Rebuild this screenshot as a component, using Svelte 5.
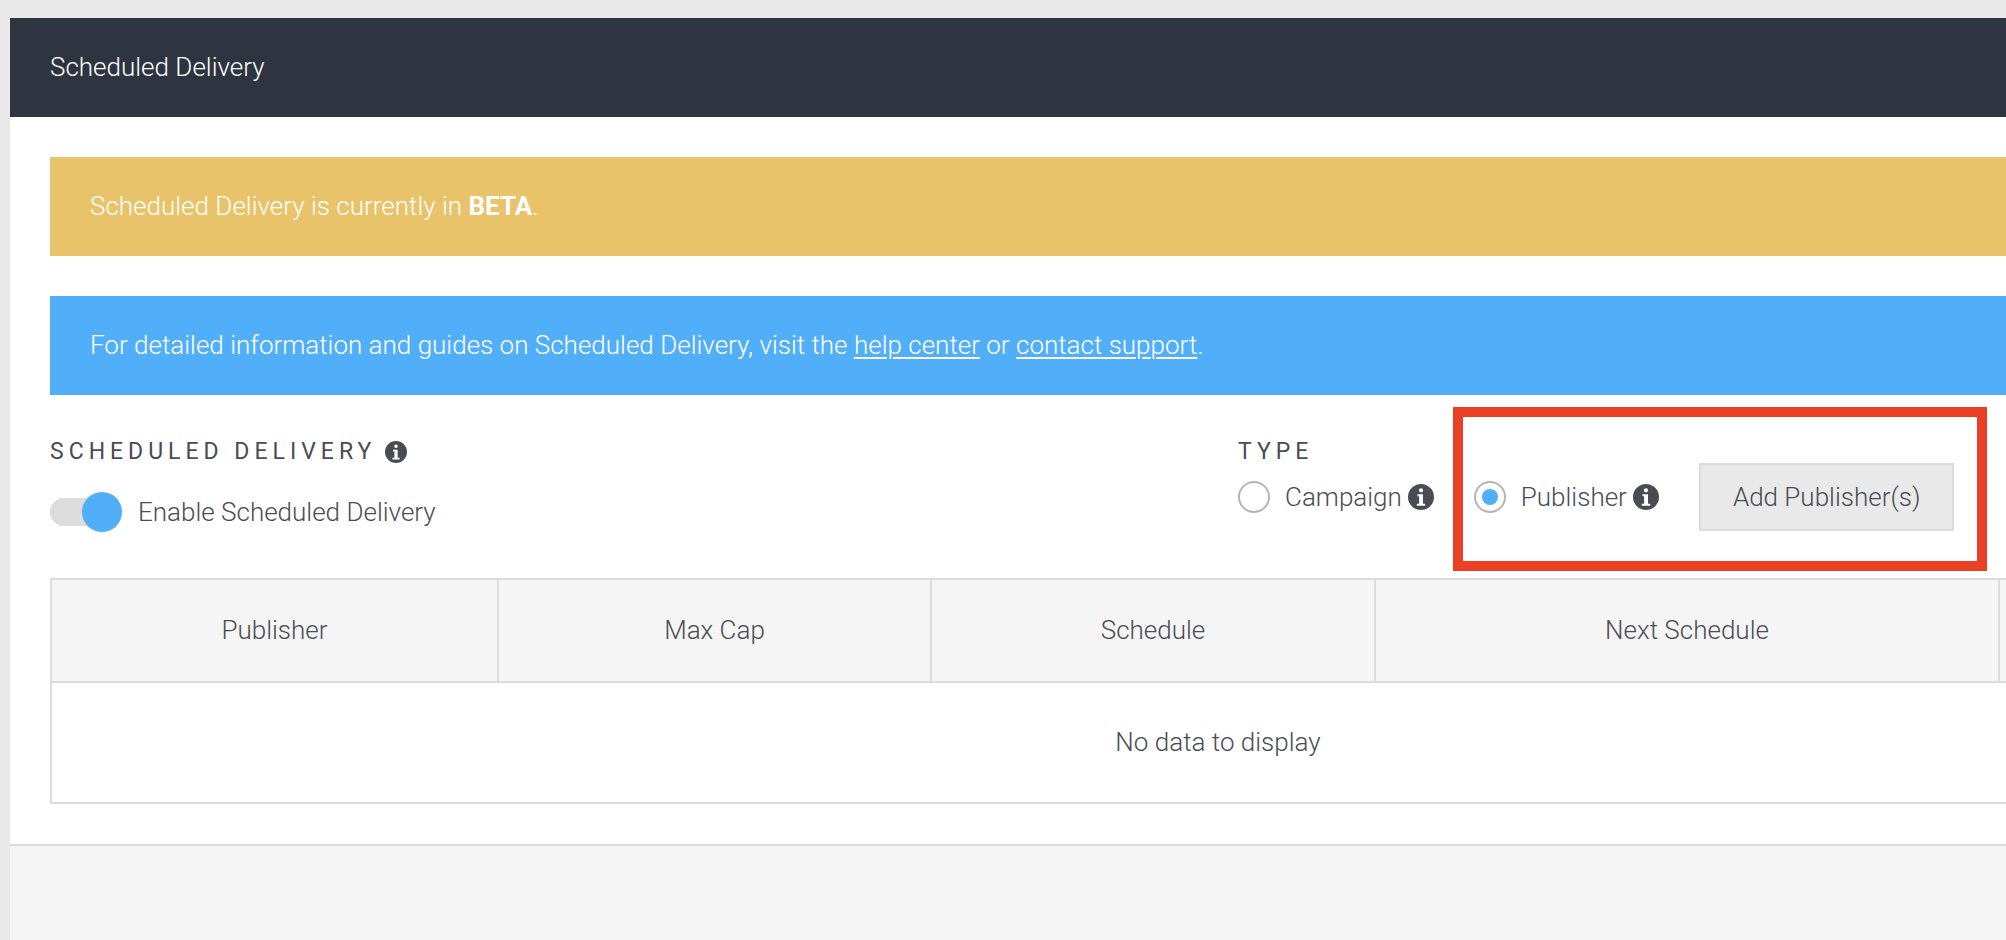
<script>
  let enabled = $state(true);
  let type = $state('publisher');
  const columns = [
    { name: 'Publisher', width: 447 },
    { name: 'Max Cap', width: 433 },
    { name: 'Schedule', width: 444 },
    { name: 'Next Schedule', width: 624 },
    { name: '', width: null },
  ];
</script>

{#snippet info(small)}
  <svg class="info" class:small viewBox="8 8 496 496" aria-hidden="true">
    <path
      fill-rule="evenodd"
      d="M256 8a248 248 0 1 0 0 496a248 248 0 1 0 0-496zM256 88a40 40 0 1 1 0 80a40 40 0 1 1 0-80zM188 204h106v180h42v40H176v-40h44V244h-32z"
    />
  </svg>
{/snippet}

<div class="page">
  <section class="panel">
    <header>Scheduled Delivery</header>
    <div class="content">
      <div class="banner warning"><p>Scheduled Delivery is currently in <strong>BETA</strong>.</p></div>
      <div class="banner notice">
        <p>
          For detailed information and guides on Scheduled Delivery, visit the
          <a href="#help">help center</a> or <a href="#support">contact support</a>.
        </p>
      </div>

      <div class="settings">
        <div>
          <h2>Scheduled Delivery {@render info(true)}</h2>
          <label class="toggle">
            <input type="checkbox" bind:checked={enabled} />
            Enable Scheduled Delivery
          </label>
        </div>
        <div>
          <h2 id="type-heading">Type</h2>
          <div class="types" role="radiogroup" aria-labelledby="type-heading">
            <label class="option">
              <input type="radio" name="type" value="campaign" bind:group={type} />
              <span>Campaign {@render info(false)}</span>
            </label>
            <div class="highlighted">
              <label class="option">
                <input type="radio" name="type" value="publisher" bind:group={type} />
                <span>Publisher {@render info(false)}</span>
              </label>
              <button type="button">Add Publisher(s)</button>
            </div>
          </div>
        </div>
      </div>

      <table>
        <colgroup>
          {#each columns as column}
            <col style:width={column.width ? `${column.width}px` : null} />
          {/each}
        </colgroup>
        <thead>
          <tr>
            {#each columns as column}
              <th scope="col">{column.name}</th>
            {/each}
          </tr>
        </thead>
        <tbody>
          <tr><td colspan={columns.length}>No data to display</td></tr>
        </tbody>
      </table>
    </div>
  </section>
</div>

<style>
  :global(body) {
    margin: 0;
    background: #f5f5f5;
  }

  .page {
    box-sizing: border-box;
    min-height: 100vh;
    overflow: hidden;
    padding-left: 10px;
    border-top: 18px solid #e9e9e9;
    background: linear-gradient(90deg, #e9e9e9 10px, #f5f5f5 10px);
    color: #494c53;
    font: 300 26px/32px Roboto, sans-serif;
  }

  .panel {
    width: calc(100% + 420px);
    background: #fff;
    border-bottom: 2px solid #dcdcdc;
  }

  header {
    padding: 33px 40px 34px;
    background: #2e3440;
    color: #fff;
  }

  .content {
    padding: 40px;
  }

  .banner {
    padding: 33px 40px 34px;
    color: #fff;
  }

  .banner p {
    margin: 0;
  }

  .banner strong {
    font-weight: 700;
  }

  .banner a {
    color: inherit;
    text-underline-offset: 3px;
    text-decoration-thickness: 2px;
  }

  .warning {
    margin-bottom: 40px;
    background: #e8c369;
  }

  .notice {
    background: #51aff9;
  }

  .settings {
    display: grid;
    grid-template-columns: 1fr 1fr;
    gap: 40px;
    padding: 44px 0 46px;
  }

  h2 {
    display: flex;
    align-items: center;
    gap: 9px;
    margin: 0 0 -2px;
    font-size: 23px;
    font-weight: 400;
    line-height: 26px;
    letter-spacing: 5px;
    text-transform: uppercase;
  }

  .info {
    flex: none;
    width: 26px;
    height: 26px;
    fill: #494c53;
  }

  .info.small {
    width: 22px;
    height: 22px;
  }

  .toggle {
    display: flex;
    align-items: center;
    gap: 16px;
    margin-top: 29px;
  }

  .toggle input {
    display: flex;
    align-items: center;
    appearance: none;
    width: 72px;
    height: 40px;
    margin: 0;
    background: linear-gradient(#dcdcdc, #dcdcdc) 14px center / 44px 28px no-repeat,
      radial-gradient(circle at 14px 20px, #dcdcdc 14px, transparent 14px);
  }

  .toggle input::before {
    content: '';
    width: 40px;
    height: 40px;
    border-radius: 50%;
    background: #b5b5b5;
  }

  .toggle input:checked::before {
    margin-left: auto;
    background: #51aff9;
  }

  .types,
  .highlighted {
    display: flex;
    align-items: center;
    gap: 40px;
  }

  .highlighted {
    position: relative;
  }

  .highlighted::after {
    content: '';
    position: absolute;
    inset: -56px -33px -40px -21px;
    border: 10px solid #ea4025;
    pointer-events: none;
  }

  .option {
    display: flex;
    align-items: center;
    gap: 15px;
  }

  .option span {
    display: flex;
    align-items: center;
    gap: 6px;
  }

  .option input {
    appearance: none;
    box-sizing: border-box;
    width: 32px;
    height: 32px;
    margin: 0;
    border: 2px solid #b5b5b5;
    border-radius: 50%;
  }

  .option input:checked {
    background: #51aff9 content-box;
    padding: 6px;
  }

  button {
    box-sizing: border-box;
    height: 68px;
    padding: 0 32px;
    border: 2px solid #dcdcdc;
    background: #e9e9e9;
    color: inherit;
    font: inherit;
  }

  table {
    width: 100%;
    table-layout: fixed;
    border: 2px solid #dcdcdc;
    border-spacing: 0;
    text-align: center;
  }

  th {
    box-sizing: border-box;
    height: 103px;
    padding: 0 0 2px;
    background: #f5f5f5;
    border-right: 2px solid #dcdcdc;
    border-bottom: 2px solid #dcdcdc;
    font-weight: 300;
  }

  th:last-child {
    border-right: 0;
  }

  td {
    box-sizing: border-box;
    height: 119px;
    padding: 0 0 2px;
  }
</style>
